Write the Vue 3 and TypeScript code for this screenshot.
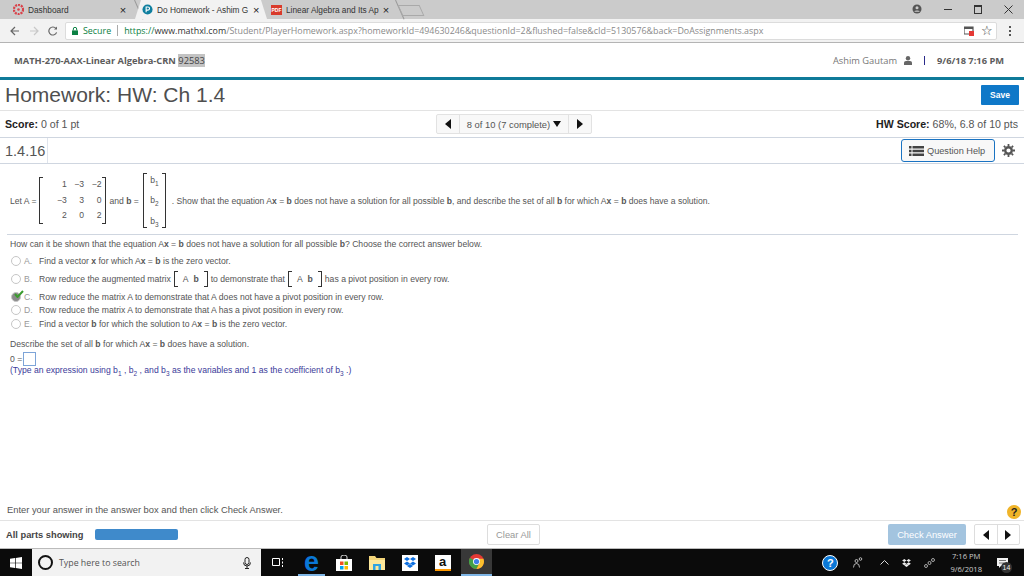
<script setup lang="ts">
const matrixA = ['1', '−3', '−2', '−3', '3', '0', '2', '0', '2']
</script>

<template>
  <div class="screen">
    <div class="tabstrip">
      <div class="tab tab-first">
        <svg class="favicon" viewBox="0 0 12 12"><circle cx="6" cy="6" r="5" fill="none" stroke="#d9424a" stroke-width="2.4" stroke-dasharray="2.2 1"/><circle cx="6" cy="6" r="1.4" fill="#d9424a"/></svg>
        <span class="tab-title">Dashboard</span>
        <span class="tab-x">×</span>
      </div>
      <div class="tab tab-active">
        <svg class="favicon" viewBox="0 0 12 12"><circle cx="6" cy="6" r="5.5" fill="#0f7f9f"/><path d="M4.5 9V3.2h2a1.7 1.7 0 0 1 0 3.5h-2" fill="none" stroke="#fff" stroke-width="1.2"/></svg>
        <span class="tab-title">Do Homework - Ashim G</span>
        <span class="tab-x">×</span>
      </div>
      <div class="tab tab-third">
        <span class="pdf">PDF</span>
        <span class="tab-title">Linear Algebra and Its Ap</span>
        <span class="tab-x">×</span>
      </div>
      <div class="tab-new"></div>
      <div class="win-controls">
        <svg width="10" height="11" viewBox="0 0 10 11"><circle cx="5" cy="5" r="4.5" fill="#555"/><circle cx="5" cy="3.8" r="1.5" fill="#ccc"/><path d="M2.2 7.8a3 2 0 0 1 5.6 0z" fill="#ccc"/></svg>
        <span class="win-min"></span>
        <span class="win-max"></span>
        <svg class="win-close" width="9" height="9" viewBox="0 0 9 9"><path d="M.5.5l8 8M8.5.5l-8 8" stroke="#333" stroke-width="1"/></svg>
      </div>
    </div>

    <div class="toolbar">
      <svg width="10" height="10" viewBox="0 0 10 10"><path d="M9 5H1.5M5 1L1 5l4 4" fill="none" stroke="#666" stroke-width="1.2"/></svg>
      <svg width="10" height="10" viewBox="0 0 10 10"><path d="M1 5h7.5M5 1l4 4-4 4" fill="none" stroke="#c8c8c8" stroke-width="1.2"/></svg>
      <svg width="10" height="10" viewBox="0 0 10 10"><path d="M8.6 6.4A4 4 0 1 1 8 2.5" fill="none" stroke="#666" stroke-width="1.2"/><path d="M9 .5v3H6z" fill="#666"/></svg>
      <div class="omnibox">
        <svg width="6" height="8" viewBox="0 0 6 8"><path d="M0 3.4h6V8H0z" fill="#0b8043"/><path d="M1.3 3.4V2a1.7 1.7 0 0 1 3.4 0v1.4" fill="none" stroke="#0b8043"/></svg>
        <span class="secure">Secure</span>
        <span class="omni-sep"></span>
        <span class="url"><span class="url-https">https://</span><span class="url-host">www.mathxl.com</span>/Student/PlayerHomework.aspx?homeworkId=494630246&amp;questionId=2&amp;flushed=false&amp;cId=5130576&amp;back=DoAssignments.aspx</span>
        <span class="omni-icons">
          <svg width="10" height="10" viewBox="0 0 10 10"><path d="M0 1h9v7H0z" fill="none" stroke="#555" stroke-width="1.2"/><path d="M0 1h9v2H0z" fill="#555"/><path d="M5 5h5v5H5z" fill="#e53935"/></svg>
          <span class="star">☆</span>
        </span>
      </div>
      <span class="kebab"><i></i><i></i><i></i></span>
    </div>

    <div class="course-bar">
      <div class="course">MATH-270-AAX-Linear Algebra-CRN <span class="selected">92583</span></div>
      <div class="user-info">
        <span class="user-name">Ashim Gautam</span>
        <svg width="8" height="9" viewBox="0 0 8 9"><circle cx="4" cy="2.2" r="2.2" fill="#666"/><path d="M0 9V6.5Q0 5 2 5h4q2 0 2 1.500V9z" fill="#666"/></svg>
        <span class="user-sep"></span>
        <span class="when">9/6/18 7:16 PM</span>
      </div>
    </div>

    <div class="title-row">
      <h1>Homework: HW: Ch 1.4</h1>
      <button class="save">Save</button>
    </div>

    <div class="score-row">
      <div class="score"><b>Score:</b> 0 of 1 pt</div>
      <div class="pager">
        <span class="pager-btn"><i class="arrow-left"></i></span>
        <span class="pager-mid">8 of 10 (7 complete) <i class="arrow-down"></i></span>
        <span class="pager-btn"><i class="arrow-right"></i></span>
      </div>
      <div class="hw-score"><b>HW Score:</b> 68%, 6.8 of 10 pts</div>
    </div>

    <div class="number-row">
      <div class="number">1.4.16</div>
      <button class="help-btn">
        <svg width="15" height="10" viewBox="0 0 15 10"><path d="M0 0h2.500v2.600H0zM3.500 0H15v2.600H3.500zM0 3.700h2.500v2.600H0zM3.500 3.700H15v2.600H3.500zM0 7.400h2.500V10H0zM3.500 7.400H15V10H3.500z" fill="#444"/></svg>
        Question Help
      </button>
      <svg class="gear" width="13" height="13" viewBox="0 0 13 13"><circle cx="6.500" cy="6.500" r="3.300" fill="none" stroke="#555" stroke-width="2.400"/><path d="M6.500 0v13M0 6.500h13M1.900 1.900l9.200 9.200M11.100 1.900l-9.200 9.200" stroke="#555" stroke-width="1.800" stroke-dasharray="2 9 2 0"/></svg>
    </div>

    <div class="problem">
      <span>Let A =</span>
      <div class="bracket matrix">
        <span v-for="(n, i) in matrixA" :key="i">{{ n }}</span>
      </div>
      <span>and <b>b</b> =</span>
      <div class="bracket vector">
        <span>b<sub>1</sub></span>
        <span>b<sub>2</sub></span>
        <span>b<sub>3</sub></span>
      </div>
      <span>. Show that the equation A<b>x</b> = <b>b</b> does not have a solution for all possible <b>b</b>, and describe the set of all <b>b</b> for which A<b>x</b> = <b>b</b> does have a solution.</span>
    </div>

    <div class="question">
      <p class="ask">How can it be shown that the equation A<b>x</b> = <b>b</b> does not have a solution for all possible <b>b</b>? Choose the correct answer below.</p>

      <div class="choice choice-a">
        <span class="radio"></span><span class="letter">A.</span>
        <span>Find a vector <b>x</b> for which A<b>x</b> = <b>b</b> is the zero vector.</span>
      </div>
      <div class="choice choice-b">
        <span class="radio"></span><span class="letter">B.</span>
        <span>Row reduce the augmented matrix</span>
        <span class="bracket aug">A&nbsp;&nbsp;<b>b</b></span>
        <span>to demonstrate that</span>
        <span class="bracket aug">A&nbsp;&nbsp;<b>b</b></span>
        <span>has a pivot position in every row.</span>
      </div>
      <div class="choice choice-c">
        <span class="radio radio-on"></span>
        <svg class="check" width="10" height="8" viewBox="0 0 10 8"><path d="M1 4l2.500 3L9 1" fill="none" stroke="#3b9c2e" stroke-width="2"/></svg>
        <span class="letter">C.</span>
        <span>Row reduce the matrix A to demonstrate that A does not have a pivot position in every row.</span>
      </div>
      <div class="choice choice-d">
        <span class="radio"></span><span class="letter">D.</span>
        <span>Row reduce the matrix A to demonstrate that A has a pivot position in every row.</span>
      </div>
      <div class="choice choice-e">
        <span class="radio"></span><span class="letter">E.</span>
        <span>Find a vector <b>b</b> for which the solution to A<b>x</b> = <b>b</b> is the zero vector.</span>
      </div>

      <p class="describe">Describe the set of all <b>b</b> for which A<b>x</b> = <b>b</b> does have a solution.</p>
      <div class="answer-line">0 = <span class="answer-box"></span></div>
      <p class="hint">(Type an expression using b<sub>1</sub> , b<sub>2</sub> , and b<sub>3</sub> as the variables and 1 as the coefficient of b<sub>3</sub> .)</p>
    </div>

    <div class="instructions">
      <span>Enter your answer in the answer box and then click Check Answer.</span>
      <span class="q-badge">?</span>
    </div>

    <div class="actions">
      <b class="parts">All parts showing</b>
      <span class="progress"></span>
      <button class="clear">Clear All</button>
      <button class="check-answer">Check Answer</button>
      <span class="foot-pager">
        <span><i class="arrow-left"></i></span>
        <span><i class="arrow-right"></i></span>
      </span>
    </div>

    <div class="taskbar">
      <svg class="start" width="12" height="12" viewBox="0 0 12 12"><path d="M0 1.700l5-.7v4.700H0zM5.700.9L12 0v5.700H5.700zM0 6.300h5V11l-5-.7zM5.700 6.300H12V12l-6.300-.9z" fill="#fff"/></svg>
      <div class="search">
        <span class="cortana"></span>
        <span class="search-text">Type here to search</span>
        <svg width="8" height="12" viewBox="0 0 8 12"><rect x="2" y=".5" width="4" height="7" rx="2" fill="none" stroke="#222"/><path d="M.5 5.500a3.500 3.500 0 0 0 7 0M4 9v2.500M2 11.500h4" fill="none" stroke="#222"/></svg>
      </div>
      <div class="tray-apps">
        <span class="app">
          <svg width="12" height="11" viewBox="0 0 12 11"><path d="M.5 1.500h7v7h-7zM10.500 1v2M10.500 4.500v2M10.500 8v2" fill="none" stroke="#fff"/></svg>
        </span>
        <span class="app app-edge app-open"><span class="edge-e">e</span></span>
        <span class="app">
          <svg width="16" height="16" viewBox="0 0 16 16"><path d="M0 4h16v12H0z" fill="#fff"/><path d="M5 4V2a3 2 0 0 1 6 0v2" fill="none" stroke="#ddd"/><path d="M4 6.500h3.500V10H4z" fill="#f25022"/><path d="M8.500 6.500H12V10H8.500z" fill="#7fba00"/><path d="M4 11h3.500v3.500H4z" fill="#00a4ef"/><path d="M8.500 11H12v3.500H8.500z" fill="#ffb900"/></svg>
        </span>
        <span class="app">
          <svg width="16" height="14" viewBox="0 0 16 14"><path d="M0 0h6l1.500 2H16v12H0z" fill="#f3d57a"/><path d="M0 4h16v10H0z" fill="#fce79b"/><path d="M4 8h8v6H4z" fill="#2fa3e3"/><path d="M6.500 10h3v4h-3z" fill="#fce79b"/></svg>
        </span>
        <span class="app">
          <span class="tile">
            <svg width="12" height="11" viewBox="0 0 12 11"><path d="M3 0l3 2-3 2-3-2zM9 0l3 2-3 2-3-2zM3 4.500l3 2-3 2-3-2zM9 4.500l3 2-3 2-3-2zM6 7l3 2-3 2-3-2z" fill="#0d6fe0"/></svg>
          </span>
        </span>
        <span class="app">
          <span class="tile tile-amazon">a</span>
        </span>
        <span class="app app-chrome app-open">
          <svg width="15" height="15" viewBox="0 0 16 16"><circle cx="8" cy="8" r="8" fill="#e53935"/><path d="M8 8L1 4A8 8 0 0 0 8 16l4-8z" fill="#43a047"/><path d="M8 5h7.400A8 8 0 0 1 8 16l4-8z" fill="#fbc02d"/><circle cx="8" cy="8" r="3.700" fill="#fff"/><circle cx="8" cy="8" r="2.800" fill="#3f7fe8"/></svg>
        </span>
      </div>
      <div class="tray">
        <span class="tray-help">?</span>
        <svg class="tray-people" width="10" height="11" viewBox="0 0 10 11"><circle cx="3.500" cy="4" r="1.500" fill="none" stroke="#ddd" stroke-width=".8"/><path d="M.5 10.500a3 4 0 0 1 6 0" fill="none" stroke="#ddd" stroke-width=".8"/><circle cx="7.500" cy="2" r="1.300" fill="none" stroke="#ddd" stroke-width=".8"/></svg>
        <svg class="tray-chev" width="9" height="5" viewBox="0 0 9 5"><path d="M.5 4.500l4-4 4 4" fill="none" stroke="#ddd"/></svg>
        <svg class="tray-dropbox" width="9" height="8" viewBox="0 0 12 11"><path d="M3 0l3 2-3 2-3-2zM9 0l3 2-3 2-3-2zM3 4.500l3 2-3 2-3-2zM9 4.500l3 2-3 2-3-2zM6 7l3 2-3 2-3-2z" fill="#eee"/></svg>
        <svg class="tray-link" width="11" height="10" viewBox="0 0 11 10"><circle cx="2" cy="8" r="1.500" fill="none" stroke="#ccc" stroke-width=".8"/><circle cx="5.500" cy="5" r="1.500" fill="none" stroke="#ccc" stroke-width=".8"/><circle cx="9" cy="2" r="1.500" fill="none" stroke="#ccc" stroke-width=".8"/></svg>
        <span class="clock"><span>7:16 PM</span><span>9/6/2018</span></span>
        <span class="notify">
          <svg width="11" height="10" viewBox="0 0 11 10"><path d="M0 0h11v8H4L2 10V8H0z" fill="#f2f2f2"/><path d="M2 2.500h7M2 5h5" stroke="#555" stroke-width=".8"/></svg>
          <span class="notify-count">14</span>
        </span>
      </div>
    </div>
  </div>
</template>

<style scoped>
.screen {
  width: 1024px;
  height: 576px;
  display: flex;
  flex-direction: column;
  overflow: hidden;
  background: #fff;
  color: #444;
  font-family: "Liberation Sans", Arial, sans-serif;
  font-size: 8.65px;
}
sub {
  font-size: 6.5px;
  line-height: 0;
}

/* browser chrome */
.tabstrip {
  height: 19px;
  flex: none;
  display: flex;
  align-items: stretch;
  background: #cbcbcb;
  font-family: "Liberation Sans", sans-serif;
  font-size: 8.3px;
  color: #333;
  position: relative;
}
.tab {
  display: flex;
  align-items: center;
  gap: 4px;
  position: relative;
  white-space: nowrap;
}
.tab::after {
  content: "";
  position: absolute;
  right: 0;
  top: 0;
  width: 1px;
  height: 21px;
  background: #9a9a9a;
  transform: rotate(-24deg);
  transform-origin: top;
}
.tab-first {
  width: 135px;
  padding-left: 13px;
  box-sizing: border-box;
}
.tab-active {
  width: 132px;
  padding-left: 7px;
  box-sizing: border-box;
  background: #f2f2f2;
  clip-path: polygon(0 100%, 6px 0, 126px 0, 100% 100%);
}
.tab-active::after {
  display: none;
}
.tab-third {
  width: 129px;
  padding-left: 4px;
  box-sizing: border-box;
}
.tab-title {
  flex: 1;
  white-space: nowrap;
}
.tab-x {
  font-size: 11px;
  width: 10px;
  margin-right: 7px;
  color: #222;
  text-align: center;
}
.favicon {
  width: 11px;
  height: 11px;
  flex: none;
}
.pdf {
  background: #d93a2b;
  color: #fff;
  font-size: 5px;
  font-weight: 700;
  width: 11px;
  height: 10px;
  line-height: 10px;
  text-align: center;
  flex: none;
}
.tab-new {
  width: 20px;
  height: 9px;
  margin: 5px 0 0 4px;
  border: 1px solid #a9a9a9;
  transform: skewX(24deg);
}
.win-controls {
  margin-left: auto;
  display: flex;
  align-items: center;
  gap: 22px;
  padding-right: 11px;
}
.win-min {
  width: 8px;
  height: 1px;
  background: #333;
}
.win-max {
  width: 6px;
  height: 6px;
  border: 1px solid #333;
  border-top-width: 2px;
}
.toolbar {
  height: 24px;
  flex: none;
  box-sizing: border-box;
  display: flex;
  align-items: center;
  gap: 9px;
  padding: 0 0 0 10px;
  background: #f2f2f2;
  border-bottom: 1px solid #b4b4b4;
}
.omnibox {
  width: 932px;
  margin-left: -2px;
  height: 18px;
  box-sizing: border-box;
  background: #fff;
  border: 1px solid #dcdcdc;
  border-radius: 2px;
  display: flex;
  align-items: center;
  padding: 0 0 0 6px;
  font-family: "Open Sans", "Liberation Sans", sans-serif;
  font-size: 8.9px;
  color: #8a8a8a;
  white-space: nowrap;
}
.secure {
  color: #0b8043;
  margin-left: 5px;
}
.omni-sep {
  width: 1px;
  height: 11px;
  background: #aaa;
  margin: 0 6px;
}
.url-https {
  color: #0b8043;
}
.url-host {
  color: #333;
}
.omni-icons {
  margin-left: auto;
  display: flex;
  align-items: center;
  gap: 7px;
  padding-right: 3px;
}
.star {
  font-size: 13px;
  color: #333;
  line-height: 1;
}
.kebab {
  display: flex;
  flex-direction: column;
  gap: 2px;
  margin-left: 3px;
}
.kebab i {
  width: 2px;
  height: 2px;
  background: #555;
}

/* page header */
.course-bar {
  height: 34px;
  flex: none;
  display: flex;
  align-items: center;
  justify-content: space-between;
  padding: 0 20px 0 14px;
  font-family: "Open Sans", "Liberation Sans", sans-serif;
  font-size: 9.3px;
  color: #5c5c5c;
}
.course {
  font-weight: 700;
}
.selected {
  background: #c3c3c3;
  color: #444;
  font-weight: 400;
}
.user-info {
  display: flex;
  align-items: center;
}
.user-name {
  margin-right: 7px;
  color: #777;
}
.user-sep {
  width: 1px;
  height: 9px;
  background: #2a2a8a;
  margin: 0 12px;
}
.when {
  font-weight: 700;
}
.title-row {
  height: 34px;
  flex: none;
  box-sizing: border-box;
  border-top: 3px solid #0f7a99;
  border-bottom: 1px solid #e3e3e3;
  display: flex;
  align-items: center;
  justify-content: space-between;
  padding: 0 5px;
}
h1 {
  margin: 0;
  font-size: 21px;
  font-weight: 400;
  color: #4f4f4f;
}
.save {
  width: 38px;
  height: 20px;
  border: 0;
  border-radius: 1px;
  background: #0f78c8;
  color: #fff;
  font: 700 8.5px "Liberation Sans", sans-serif;
  padding: 0;
}
.score-row {
  height: 27px;
  flex: none;
  box-sizing: border-box;
  border-bottom: 1px solid #cfd6e0;
  display: flex;
  align-items: center;
  padding: 0 6px 0 5px;
  font-size: 10.6px;
  color: #555;
}
.score {
  width: 431px;
}
.score b,
.hw-score b {
  color: #222;
}
.pager {
  display: flex;
  height: 20px;
  width: 156px;
  box-sizing: border-box;
  border: 1px solid #e2e2e2;
  border-radius: 2px;
  background: #f8f8f8;
  font-size: 9.4px;
  align-items: center;
}
.pager-btn {
  width: 22px;
  height: 100%;
  display: flex;
  align-items: center;
  justify-content: center;
}
.pager-mid {
  flex: 1;
  height: 100%;
  display: flex;
  align-items: center;
  justify-content: center;
  gap: 3px;
  border-left: 1px solid #e2e2e2;
  border-right: 1px solid #e2e2e2;
}
.arrow-left,
.arrow-right {
  width: 0;
  height: 0;
  border-top: 5px solid transparent;
  border-bottom: 5px solid transparent;
}
.arrow-left {
  border-right: 6px solid #111;
}
.arrow-right {
  border-left: 6px solid #111;
}
.arrow-down {
  width: 0;
  height: 0;
  border-left: 4px solid transparent;
  border-right: 4px solid transparent;
  border-top: 6px solid #111;
}
.hw-score {
  margin-left: auto;
}
.number-row {
  height: 26px;
  flex: none;
  box-sizing: border-box;
  border-bottom: 1px solid #cfd6e0;
  display: flex;
  align-items: stretch;
}
.number {
  width: 48px;
  box-sizing: border-box;
  padding-left: 5px;
  border-right: 1px solid #dfe4ec;
  font-size: 14.500px;
  line-height: 26px;
  color: #555;
}
.help-btn {
  margin: 1px 0 1px auto;
  width: 94px;
  box-sizing: border-box;
  display: flex;
  align-items: center;
  gap: 3px;
  padding: 0 0 0 7px;
  border: 1.500px solid #1a73c2;
  border-radius: 3px;
  background: #f8f8f8;
  font: 9.2px "Liberation Sans", sans-serif;
  color: #555;
}
.gear {
  align-self: center;
  margin: 0 9px 0 7px;
}

/* problem text */
.problem {
  height: 71px;
  flex: none;
  box-sizing: border-box;
  margin: 0 6px 0 7px;
  padding: 9px 0 0 3px;
  border-bottom: 1px solid #cfd6e0;
  display: flex;
  align-items: flex-start;
  gap: 3px;
  font-size: 8.58px;
  color: #555;
  line-height: 56px;
  white-space: nowrap;
}
.bracket {
  position: relative;
  display: inline-grid;
}
.bracket::before,
.bracket::after {
  content: "";
  position: absolute;
  top: 0;
  bottom: 0;
  width: 3px;
  border: 1px solid #333;
}
.bracket::before {
  left: 0;
  border-right: 0;
}
.bracket::after {
  right: 0;
  border-left: 0;
}
.matrix {
  width: 67px;
  height: 47px;
  margin-top: 4px;
  box-sizing: border-box;
  padding: 0 5px 0 10px;
  grid-template-columns: repeat(3, 1fr);
  grid-auto-rows: 1fr;
  line-height: 15.600px;
  text-align: right;
}
.vector {
  width: 23px;
  height: 55px;
  margin: 0 3px 0 1px;
  grid-auto-rows: 20.500px;
  align-content: center;
  line-height: 20.500px;
  text-align: center;
}
.question {
  flex: 1;
  padding: 4px 0 0 10px;
  color: #555;
  white-space: nowrap;
}
.question p {
  margin: 0;
}
.choice {
  display: flex;
  align-items: center;
  position: relative;
}
.choice-a {
  margin-top: 6px;
  height: 12px;
}
.choice-b {
  margin-top: 4px;
  height: 16px;
}
.choice-c {
  margin-top: 4px;
  height: 12px;
}
.choice-d {
  margin-top: 1px;
  height: 12px;
}
.choice-e {
  margin-top: 2px;
  height: 12px;
}
.radio {
  width: 8px;
  height: 8px;
  margin: 0 3px 0 1px;
  flex: none;
  border: 1px solid #c6c6c6;
  border-radius: 50%;
}
.radio-on {
  background: #8a8a8a;
}
.check {
  position: absolute;
  left: 4px;
  top: -1px;
}
.letter {
  width: 15px;
  flex: none;
  color: #999;
}
.aug {
  display: inline-block;
  height: 16px;
  line-height: 16px;
  padding: 0 9px;
  margin: 0 3px 0 3px;
}
.describe {
  margin-top: 9px !important;
}
.answer-line {
  display: flex;
  align-items: center;
  margin-top: 3px;
  height: 14px;
}
.answer-box {
  width: 11px;
  height: 12px;
  border: 1px solid #7da4d8;
  margin-left: 1px;
  background: #fff;
}
.hint {
  color: #3b3b9a;
  margin-top: -1px !important;
}

/* footer */
.instructions {
  height: 21px;
  flex: none;
  box-sizing: border-box;
  border-bottom: 1px solid #e3e3e3;
  display: flex;
  align-items: center;
  justify-content: space-between;
  padding: 0 3px 1px 7px;
  font-size: 9.35px;
  color: #555;
}
.q-badge {
  width: 14px;
  height: 14px;
  border-radius: 50%;
  background: #f0b429;
  color: #222;
  text-align: center;
  font-weight: 700;
  font-size: 11px;
  line-height: 14px;
  margin-bottom: -4px;
}
.actions {
  height: 28px;
  flex: none;
  box-sizing: border-box;
  display: flex;
  align-items: center;
  padding: 0 4px 0 6px;
  border-bottom: 1px solid #bbb;
  font-size: 9.3px;
  color: #444;
}
.parts {
  width: 89px;
}
.progress {
  width: 83px;
  height: 11px;
  border-radius: 2px;
  background: #3f8acb;
}
.actions button {
  height: 21px;
  border-radius: 2px;
  font: 9.35px "Liberation Sans", sans-serif;
  padding: 0;
}
.clear {
  width: 53px;
  margin-left: 309px;
  background: #fff;
  color: #999;
  border: 1px solid #ddd;
}
.check-answer {
  width: 78px;
  margin-left: 348px;
  background: #a3c4df;
  border: 0;
  color: #fff;
}
.foot-pager {
  display: flex;
  width: 46px;
  height: 21px;
  margin-left: 8px;
  box-sizing: border-box;
  border: 1px solid #ddd;
  border-radius: 2px;
}
.foot-pager span {
  flex: 1;
  display: flex;
  align-items: center;
  justify-content: center;
}
.foot-pager span + span {
  border-left: 1px solid #ddd;
}

/* taskbar */
.taskbar {
  height: 27px;
  flex: none;
  display: flex;
  align-items: center;
  background: #0b0b0b;
  color: #ddd;
}
.start {
  margin: 0 10px;
}
.search {
  width: 229px;
  height: 100%;
  box-sizing: border-box;
  background: #f2f2f2;
  display: flex;
  align-items: center;
  padding: 0 10px 0 6px;
}
.cortana {
  width: 11px;
  height: 11px;
  border: 2px solid #111;
  border-radius: 50%;
}
.search-text {
  flex: 1;
  margin-left: 6px;
  font-family: "Open Sans", "Liberation Sans", sans-serif;
  font-size: 8.8px;
  color: #555;
}
.tray-apps {
  display: flex;
  height: 100%;
}
.app {
  width: 33px;
  height: 100%;
  box-sizing: border-box;
  display: flex;
  align-items: center;
  justify-content: center;
  flex: none;
}
.app-open {
  border-bottom: 2px solid #7fb6e6;
}
.app-edge {
  width: 27px;
  margin: 0 2px 0 4px;
}
.app-chrome {
  width: 31px;
  margin-left: 2px;
  background: #383838;
}
.edge-e {
  color: #0a78d7;
  font: 700 27px/27px "Liberation Sans", sans-serif;
  margin-top: 2px;
}
.tile {
  width: 16px;
  height: 16px;
  background: #fff;
  display: flex;
  align-items: center;
  justify-content: center;
}
.tile-amazon {
  color: #111;
  font: 700 13px/14px "Liberation Sans", sans-serif;
  border-bottom: 2px solid #f90;
  box-sizing: border-box;
}
.tray {
  margin-left: auto;
  display: flex;
  align-items: center;
  height: 100%;
  padding-right: 16px;
}
.tray-help {
  width: 14px;
  height: 14px;
  border: 1px solid #fff;
  border-radius: 50%;
  background: #0a78d7;
  color: #fff;
  font-size: 11px;
  font-weight: 700;
  line-height: 14px;
  text-align: center;
}
.tray-people {
  margin-left: 15px;
}
.tray-chev {
  margin-left: 17px;
}
.tray-dropbox {
  margin-left: 13px;
}
.tray-link {
  margin-left: 13px;
}
.clock {
  display: flex;
  flex-direction: column;
  align-items: center;
  gap: 3px;
  margin: 0 15px;
  font-family: "Open Sans", "Liberation Sans", sans-serif;
  font-size: 7.6px;
  color: #ccc;
}
.notify {
  position: relative;
  display: flex;
}
.notify-count {
  position: absolute;
  left: 4px;
  top: 4px;
  width: 11px;
  height: 11px;
  border-radius: 50%;
  background: #333;
  color: #eee;
  font-size: 7px;
  line-height: 11px;
  text-align: center;
}
</style>

<style>
html,
body {
  margin: 0;
  background: #fff;
}
</style>
